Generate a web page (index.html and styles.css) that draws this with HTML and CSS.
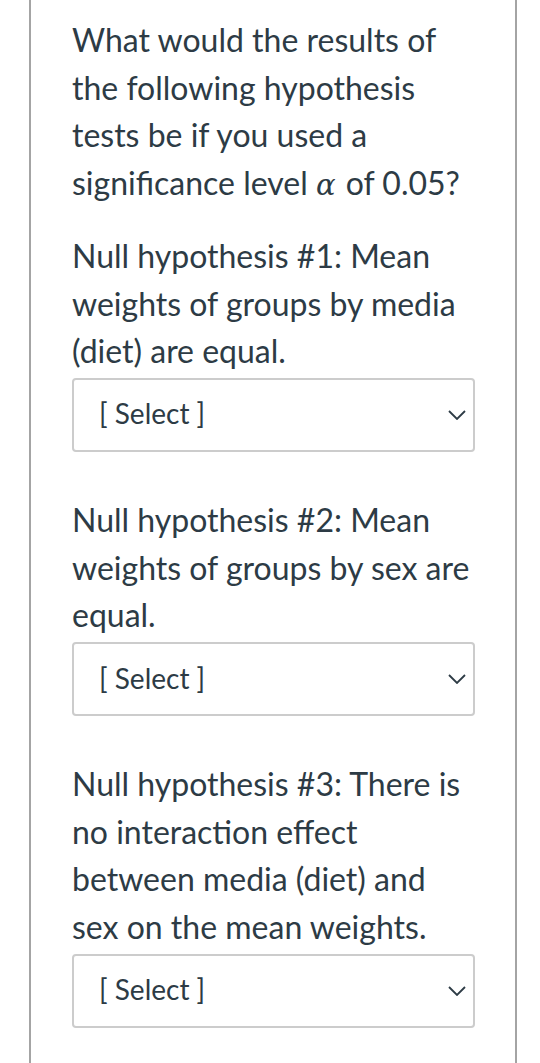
FILE: index.html
```html
<!DOCTYPE html>
<html>
<head>
<meta charset="utf-8">
<link rel="stylesheet" href="styles.css">
</head>
<body>
<div class="card">
  <p class="para intro">What would the results of the following hypothesis tests be if you used a significance level <span class="alpha">α</span> of 0.05?</p>
  <div class="question">
    <p class="para">Null hypothesis #1: Mean weights of groups by media (diet) are equal.</p>
    <div class="select"><span class="select-text">[ Select ]</span><svg class="chev" width="18" height="10" viewBox="0 0 18 10"><path d="M1 1 L9 9 L17 1" fill="none" stroke="#2d3b45" stroke-width="1.8"/></svg></div>
  </div>
  <div class="question">
    <p class="para">Null hypothesis #2: Mean weights of groups by sex are equal.</p>
    <div class="select"><span class="select-text">[ Select ]</span><svg class="chev" width="18" height="10" viewBox="0 0 18 10"><path d="M1 1 L9 9 L17 1" fill="none" stroke="#2d3b45" stroke-width="1.8"/></svg></div>
  </div>
  <div class="question">
    <p class="para">Null hypothesis #3: There is no interaction effect between media (diet) and sex on the mean weights.</p>
    <div class="select"><span class="select-text">[ Select ]</span><svg class="chev" width="18" height="10" viewBox="0 0 18 10"><path d="M1 1 L9 9 L17 1" fill="none" stroke="#2d3b45" stroke-width="1.8"/></svg></div>
  </div>
</div>
</body>
</html>
```
FILE: styles.css
```css
html, body {
  margin: 0;
  padding: 0;
  background: #ffffff;
}
body {
  font-family: Lato, "Open Sans", sans-serif;
  color: #2d3b45;
}
.card {
  margin: 0 23px 0 29px;
  border-left: 2px solid #a4a4a4;
  border-right: 2px solid #a4a4a4;
  padding: 16px 40px 40px 41px;
  min-height: 1100px;
  box-sizing: border-box;
  display: flex;
  flex-direction: column;
  gap: 44px;
}
.para {
  margin: 0;
  font-size: 32px;
  line-height: 47.7px;
}
.para.intro {
  margin-bottom: -19px;
}
.alpha {
  font-family: "DejaVu Serif", "Liberation Serif", serif;
  font-style: italic;
  font-size: 29px;
  line-height: 1;
  margin-right: 2px;
}
.question {
  display: flex;
  flex-direction: column;
  gap: 3px;
}
.select {
  height: 74px;
  box-sizing: border-box;
  border: 2px solid #cccccc;
  border-radius: 4px;
  display: flex;
  align-items: center;
  justify-content: space-between;
  padding: 0 7px 0 25px;
}
.select-text {
  font-size: 28px;
  margin-top: -3px;
}
.chev {
  display: block;
}
```
